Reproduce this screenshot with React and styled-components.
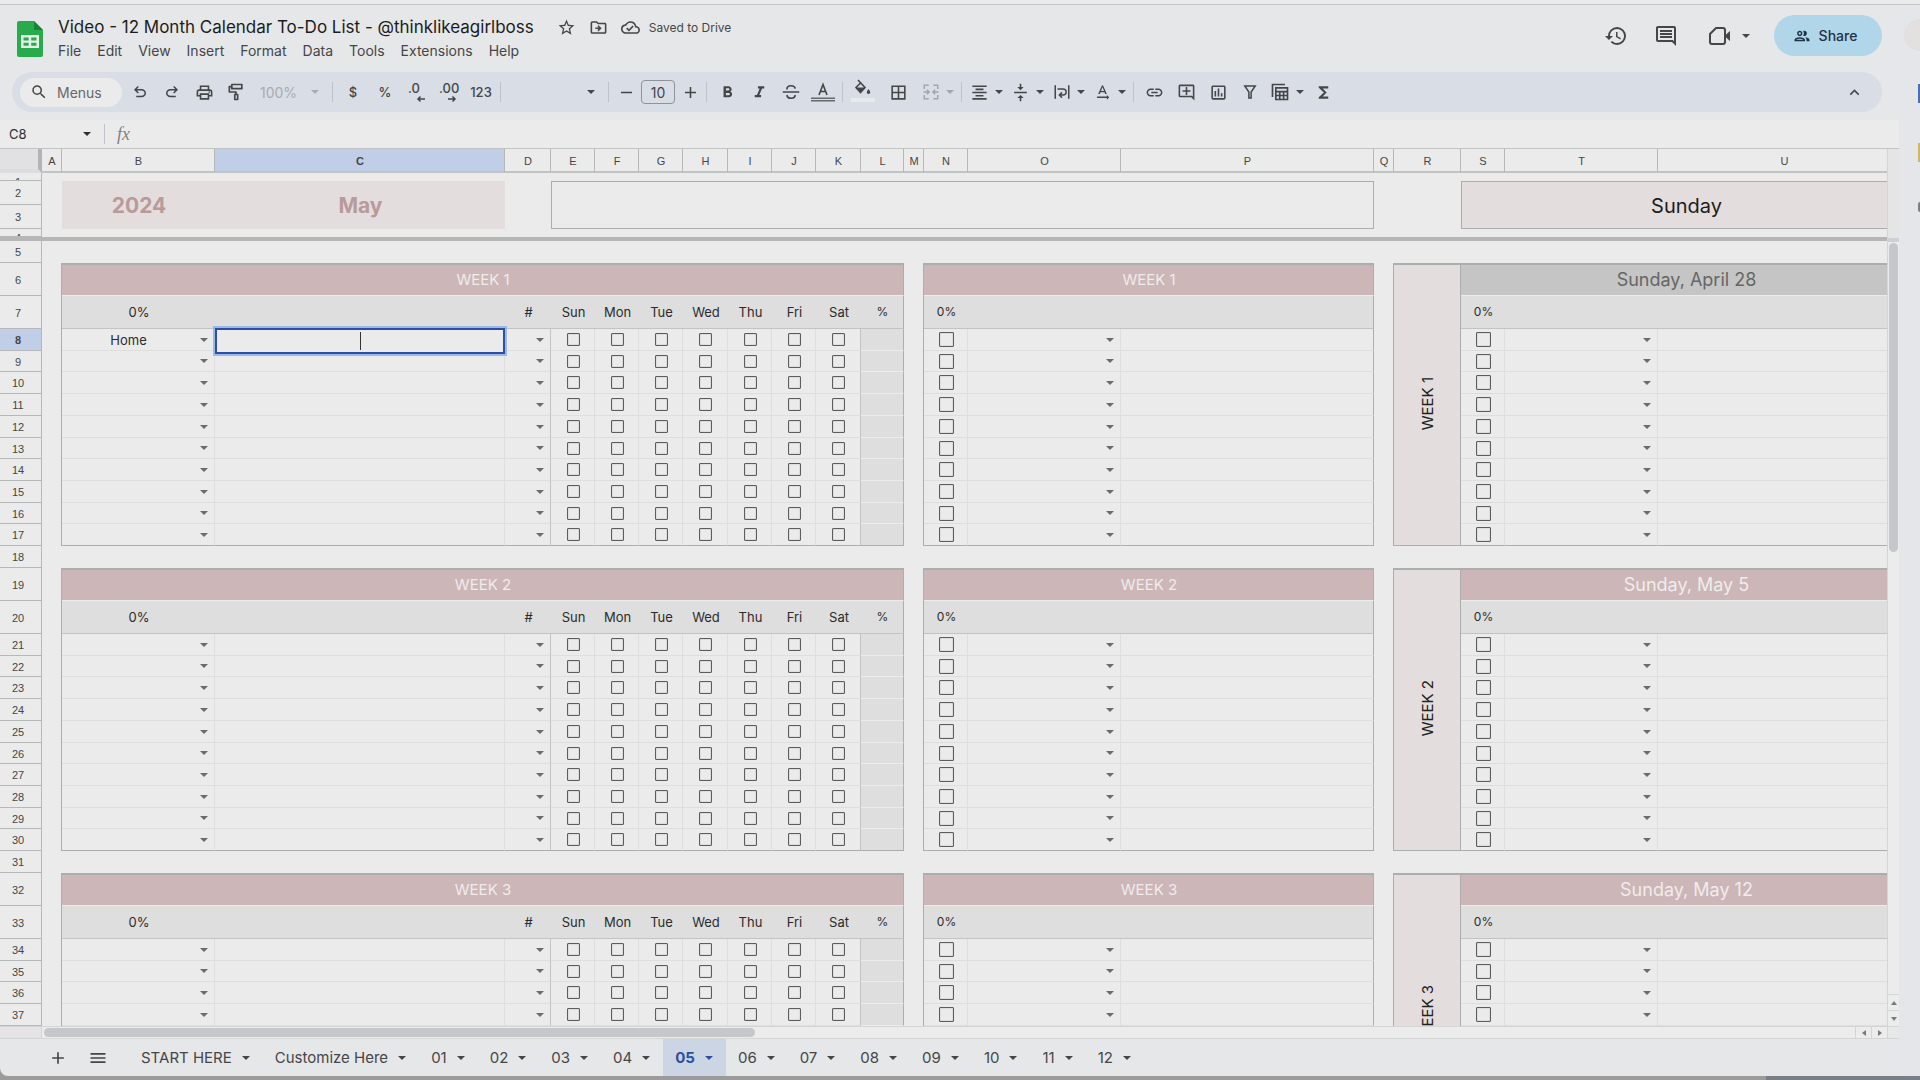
import React from 'react'
import styled, { createGlobalStyle } from 'styled-components'
import {
    MdAdd,
    MdBorderAll,
    MdFormatAlignCenter,
    MdFormatBold,
    MdFormatItalic,
    MdFunctions,
    MdHistory,
    MdKeyboardArrowUp,
    MdLink,
    MdMenu,
    MdOutlineAddComment,
    MdOutlineCloudDone,
    MdOutlineDriveFileMove,
    MdOutlineInsertChart,
    MdOutlineInsertComment,
    MdOutlinePeople,
    MdOutlinePrint,
    MdRemove,
    MdSearch,
    MdStarOutline,
    MdTextRotationNone,
    MdVerticalAlignCenter
} from 'react-icons/md'

const colors = {
    paper: '#ebebeb',
    chrome: '#e6e7e8',
    toolbar: '#d9dde5',
    ink: '#444648',
    line: '#dedede',
    mid: '#c2c3c3',
    strong: '#acadad',
    pink: '#ccb6b8',
    blush: '#e3dddd',
    rose: '#b99a9b',
    summary: '#dedede',
    active: '#c0cee8',
    blue: '#2d4fa3'
}

const GlobalStyle = createGlobalStyle`
    * {
        box-sizing: border-box;
    }

    body {
        margin: 0;
        background: ${colors.chrome};
        color: ${colors.ink};
        font-family: Inter, 'Open Sans', sans-serif;
    }

    button, input, select {
        margin: 0;
        padding: 0;
        border: 0;
        border-radius: 0;
        background: none;
        color: inherit;
        font: inherit;
        appearance: none;
    }
`

const Page = styled.div`
    display: flex;
    flex-direction: column;
    height: 100vh;
    overflow: hidden;
    background: #9b9b9b;
`

const WindowEdge = styled.div`
    flex: none;
    height: 5px;
    background: ${colors.paper};
    border-bottom: 1px solid #c4c5c6;
`

const Window = styled.div`
    display: flex;
    flex: 1;
    min-height: 0;
    background: ${colors.chrome};
    border-radius: 0 0 0 8px;
    overflow: hidden;
`

const Main = styled.div`
    display: flex;
    flex-direction: column;
    flex: 1;
    min-width: 0;
`

const DeskEdge = styled.div`
    flex: none;
    height: 4px;
    background: linear-gradient(to right, #9b9b9b 92%, #787f86 92%);
`

/* Header */

const Header = styled.header`
    display: flex;
    flex: none;
    height: 67px;
    padding: 10px 17px 0 17px;
`

const Logo = styled.svg`
    flex: none;
    width: 26px;
    height: 36px;
    margin-top: 6px;
`

const Heading = styled.div`
    flex: 1;
    padding: 0 0 0 15px;
`

const TitleRow = styled.div`
    display: flex;
    align-items: center;
    height: 24px;
`

const Title = styled.h1`
    margin: 0 17px 0 0;
    color: #1b1c1d;
    font-size: 17px;
    font-weight: 400;
    line-height: 24px;
    white-space: nowrap;
`

const TitleIcon = styled.button`
    display: flex;
    align-items: center;
    justify-content: center;
    width: 32px;
    height: 24px;
    font-size: 19px;
`

const Saved = styled.span`
    padding-left: 2px;
    font-size: 12px;
`

const MenuBar = styled.nav`
    display: flex;
    gap: 16px;
    height: 24px;
    align-items: center;
`

const MenuItem = styled.button`
    font-size: 14px;
    line-height: 24px;
`

const HeaderActions = styled.div`
    display: flex;
    align-items: center;
    height: 41px;
`

const HeaderButton = styled.button`
    display: flex;
    align-items: center;
    justify-content: center;
    gap: 10px;
    width: ${(props) => (props.$wide ? '76px' : '50px')};
    height: 40px;
    font-size: 24px;
`

const Share = styled.button`
    display: flex;
    align-items: center;
    justify-content: center;
    gap: 8px;
    width: 108px;
    height: 41px;
    margin-left: 7px;
    padding-right: 6px;
    border-radius: 21px;
    background: #b2d6e9;
    color: #1f3346;
    font-size: 14px;
    font-weight: 500;

    svg {
        font-size: 18px;
    }
`

/* Toolbar */

const Toolbar = styled.div`
    display: flex;
    align-items: center;
    flex: none;
    height: 40px;
    margin: 0 17px 8px 12px;
    padding: 0 12px 0 8px;
    border-radius: 20px;
    background: ${colors.toolbar};
`

const MenuSearch = styled.label`
    display: flex;
    align-items: center;
    gap: 9px;
    width: 102px;
    height: 29px;
    margin-right: 2px;
    padding-left: 10px;
    border-radius: 15px;
    background: ${colors.paper};
    font-size: 18px;

    input {
        width: 60px;
        font-size: 14px;
    }

    input::placeholder {
        color: #66686a;
        opacity: 1;
    }
`

const Tool = styled.button`
    display: flex;
    align-items: center;
    justify-content: center;
    flex: none;
    width: ${(props) => (props.$wide ? '38px' : '32px')};
    height: 30px;
    font-size: ${(props) => (props.$text ? '13px' : '19px')};
    font-weight: ${(props) => (props.$text ? 500 : 400)};
`

const SplitTool = styled(Tool)`
    gap: 6px;
    width: 41px;
    color: ${(props) => (props.$off ? '#a3a6ab' : 'inherit')};
`

const StepTool = styled(Tool)`
    width: 26px;
`

const Divider = styled.span`
    flex: none;
    width: 1px;
    height: 20px;
    margin: 0 4px 0 3px;
    background: #bfc3c9;
`

const Picker = styled.label`
    display: grid;
    align-items: center;
    width: ${(props) => props.$width};
    height: 28px;
    color: ${(props) => (props.$off ? '#a9acb1' : 'inherit')};
    font-size: 14px;

    select {
        grid-area: 1 / 1;
        width: 100%;
        padding-left: 8px;
    }

    svg {
        grid-area: 1 / 1;
        justify-self: end;
        margin-right: 10px;
        pointer-events: none;
    }
`

const SizeBox = styled.input`
    width: 34px;
    height: 24px;
    margin: 0 2px;
    border: 1px solid #8f9296;
    border-radius: 4px;
    font-size: 14px;
    text-align: center;
`

const Collapse = styled(Tool)`
    margin-left: auto;
`

/* Formula bar */

const FormulaBar = styled.div`
    display: flex;
    align-items: center;
    flex: none;
    height: 29px;
    padding-left: 9px;
    background: ${colors.paper};
    border-bottom: 1px solid ${colors.mid};
    font-size: 13px;
`

const NameBox = styled.label`
    display: flex;
    align-items: center;
    width: 92px;
    padding-right: 10px;
    color: #2d2f30;

    input {
        flex: 1;
        min-width: 0;
    }
`

const Fx = styled.span`
    padding: 0 8px;
    color: #808284;
    font-family: 'Liberation Serif', serif;
    font-size: 18px;
    font-style: italic;
`

const FormulaInput = styled.input`
    flex: 1;
`

/* Sheet */

const SheetArea = styled.div`
    display: flex;
    flex: 1;
    min-height: 0;
`

const Viewport = styled.div`
    flex: 1;
    min-width: 0;
    overflow: hidden;
    background: ${colors.paper};
`

const Sheet = styled.table`
    width: 1911px;
    table-layout: fixed;
    border-collapse: separate;
    border-spacing: 0;
    color: #2b2b2b;
    font-size: 13px;
    line-height: 16px;
`

const Row = styled.tr`
    height: ${(props) => props.$height}px;
`

const ColHead = styled.th`
    padding: 2px 0 0 1px;
    border-right: 1px solid #b6b7b7;
    border-bottom: 2px solid ${colors.mid};
    background: ${(props) => (props.$active ? colors.active : colors.paper)};
    color: ${colors.ink};
    font-family: 'Liberation Sans', Arial, sans-serif;
    font-size: 11px;
    font-weight: ${(props) => (props.$active ? 700 : 400)};
`

const Corner = styled.th`
    padding: 0;
    border-right: 4px solid #b3b4b5;
    border-bottom: 4px solid #dcdcde;
    background: #e1e1e4;
`

const RowHead = styled.th`
    padding: 1px 5px 0 0;
    overflow: hidden;
    border-right: 1px solid #b6b7b7;
    border-bottom: 1px solid #b6b7b7;
    background: ${(props) => (props.$active ? colors.active : colors.paper)};
    color: ${colors.ink};
    font-family: 'Liberation Sans', Arial, sans-serif;
    font-size: 11px;
    font-weight: ${(props) => (props.$active ? 700 : 400)};
`

const Clipped = styled.div`
    height: 6px;
    overflow: hidden;
    line-height: 16px;
`

const FreezeBar = styled.td`
    padding: 0;
    background: #b6b6b6;
`

const Cell = styled.td`
    position: relative;
    padding: 0 0 0 1px;
    text-align: center;
    font-size: ${(props) => (props.$small ? '12px' : '13px')};
    background: ${(props) => props.$fill || 'transparent'};
    border-right: ${(props) => (props.$right ? `1px solid ${colors[props.$right]}` : '0')};
    border-bottom: ${(props) => (props.$bottom ? `1px solid ${colors[props.$bottom]}` : '0')};
`

const BigCell = styled(Cell)`
    padding-top: 2px;
    color: ${colors.rose};
    font-size: 21px;
    font-weight: 700;
`

const OutlinedCell = styled(Cell)`
    padding-top: 2px;
    border: 1px solid ${colors.strong};
    color: #1c1c1c;
    font-size: 20px;
`

const Banner = styled(Cell)`
    border-top: 2px solid ${colors.strong};
    border-bottom: 1px solid #ececec;
    color: ${(props) => props.$ink || '#f0ecec'};
    font-size: ${(props) => (props.$day ? '18px' : '15px')};
`

const WeekLabel = styled(Cell)`
    border-top: 2px solid ${colors.strong};
    color: #222222;
    font-size: 15px;

    span {
        writing-mode: vertical-rl;
        transform: rotate(180deg);
    }
`

const Tick = styled.input.attrs({ type: 'checkbox' })`
    display: block;
    width: ${(props) => (props.$large ? '15px' : '13px')};
    height: ${(props) => (props.$large ? '15px' : '13px')};
    margin: 0 auto;
    border: 1px solid #5c5c5c;
    border-radius: 1px;
    box-shadow: inset 0 0 1px #5c5c5c;
`

const DropCell = styled.div`
    display: grid;
    align-items: center;
    height: 20px;

    select {
        grid-area: 1 / 1;
        width: 100%;
        padding-right: 20px;
        text-align: center;
        text-align-last: center;
    }

    svg {
        grid-area: 1 / 1;
        justify-self: end;
        margin-right: 6px;
        color: #6b6b6b;
        pointer-events: none;
    }
`

const CellEditor = styled.div`
    position: absolute;
    z-index: 1;
    top: -1px;
    left: 0;
    right: -1px;
    height: 26px;
    display: flex;
    align-items: center;
    justify-content: center;
    border: 2px solid ${colors.blue};
    outline: 2px solid #9cb8ea;
    background: ${colors.paper};

    input {
        position: absolute;
        inset: 0;
        width: 100%;
        text-align: center;
    }
`

const TextCursor = styled.span`
    width: 1px;
    height: 18px;
    background: #333333;
`

/* Scroll bars */

const VerticalScroll = styled.div`
    display: flex;
    flex-direction: column;
    flex: none;
    width: 12px;
    border-left: 1px solid #d4d5d5;
    background: #ececec;
`

const ScrollHead = styled.div`
    height: 93px;
    border-bottom: 4px solid #cdd0d6;
    background: #e5e5e6;
`

const ScrollTrack = styled.div`
    flex: 1;
    padding: 1px;
`

const ScrollThumb = styled.div`
    width: ${(props) => props.$width || '9px'};
    height: ${(props) => props.$height || '9px'};
    border-radius: 5px;
    background: #c6c7cb;
`

const ScrollButton = styled.button`
    display: flex;
    align-items: center;
    justify-content: center;
    flex: none;
    width: ${(props) => (props.$side ? '16px' : '11px')};
    height: ${(props) => (props.$side ? '12px' : '16px')};
    border: 0 solid #d4d5d5;
    border-width: ${(props) => (props.$side ? '0 0 0 1px' : '1px 0 0 0')};
    color: #77797b;
`

const HorizontalScroll = styled.div`
    display: flex;
    flex: none;
    height: 13px;
    border-top: 1px solid #d4d5d5;
    border-bottom: 1px solid #d4d5d5;
    background: #ececec;
`

const ScrollGutter = styled.div`
    width: 42px;
    border-right: 1px solid #d4d5d5;
    background: #e5e3e5;
`

const HorizontalTrack = styled.div`
    flex: 1;
    padding: 1px 2px;
`

const ScrollEnd = styled.div`
    width: 12px;
    border-left: 1px solid #d4d5d5;
    background: #e8e8ea;
`

/* Sheet tabs */

const Tabs = styled.footer`
    display: flex;
    align-items: stretch;
    flex: none;
    height: 37px;
    padding-left: 38px;
`

const TabTool = styled.button`
    display: flex;
    align-items: center;
    justify-content: center;
    width: 40px;
    font-size: 20px;
`

const Tab = styled.button`
    display: flex;
    align-items: center;
    gap: 10px;
    padding: 0 13px 0 12px;
    background: ${(props) => (props.$active ? '#ccd5e4' : 'transparent')};
    color: ${(props) => (props.$active ? colors.blue : 'inherit')};
    font-size: 15px;
    font-weight: ${(props) => (props.$active ? 700 : 400)};
    white-space: nowrap;
`

const TabList = styled.div`
    display: flex;
    padding-left: 11px;
`

/* Side panel */

const SidePanel = styled.aside`
    display: flex;
    flex-direction: column;
    align-items: flex-end;
    flex: none;
    width: 21px;
    overflow: hidden;
    background: #e4e6e9;
`

const Avatar = styled.div`
    flex: none;
    align-self: flex-start;
    width: 32px;
    height: 32px;
    margin: 14px 0 33px 5px;
    border-radius: 16px;
    background: #e2e1e0;
    border: 1px solid #dfdfde;
`

const AddOn = styled.button`
    width: 2px;
    height: ${(props) => (props.$round ? '10px' : '19px')};
    margin-bottom: 40px;
    border-radius: ${(props) => (props.$round ? '2px 0 0 2px' : '0')};
    background: ${(props) => props.$color};
`

/* Drawings */

const Caret = ({ size = 8 }) => (
    <svg width={size} height={size / 2} viewBox="0 0 8 4" fill="currentColor" aria-hidden="true">
        <path d="M0 0h8L4 4z" />
    </svg>
)

const Icon = ({ children, size = 18 }) => (
    <svg width={size} height={size} viewBox="0 0 24 24" fill="currentColor" aria-hidden="true">
        {children}
    </svg>
)

const undoPath =
    'M7 19v-2h7.1q1.575 0 2.738-1T18 13.5 16.838 11 14.1 10H7.8l2.6 2.6L9 14 4 9l5-5 1.4 1.4L7.8 8h6.3q2.425 0 4.163 1.575T20 13.5t-1.737 3.925T14.1 19z'

const UndoIcon = () => (
    <Icon>
        <path d={undoPath} />
    </Icon>
)

const RedoIcon = () => (
    <Icon>
        <path d={undoPath} transform="matrix(-1 0 0 1 24 0)" />
    </Icon>
)

const PaintIcon = () => (
    <Icon size={20}>
        <path
            d="M7 3h12v5H7zM7 5.500H4V12h8v3M10.500 15h3.500v6h-3.500z"
            fill="none"
            stroke="currentColor"
            strokeWidth="2"
            strokeLinejoin="round"
        />
    </Icon>
)

const DecimalIcon = ({ text, back }) => (
    <svg width="22" height="24" viewBox="0 0 22 24" aria-hidden="true">
        <text x={back ? 2 : 1} y="13" fill="currentColor" fontSize="13" fontWeight="500">
            {text}
        </text>
        <path
            d={back ? 'M19 19h-7m2.500-2.500L12 19l2.500 2.500' : 'M10 19h7m-2.500-2.500L17 19l-2.500 2.500'}
            fill="none"
            stroke="currentColor"
            strokeWidth="1.500"
        />
    </svg>
)

const StrikeIcon = () => (
    <Icon size={18}>
        <path
            d="M1 12h22M6.500 8.500C6.500 2 17 2.500 17.500 7.500M6.500 16c1 6 11 5.500 11 0"
            fill="none"
            stroke="currentColor"
            strokeWidth="2.200"
        />
    </Icon>
)

const TextColorIcon = () => (
    <svg width="24" height="24" viewBox="0 0 24 24" aria-hidden="true">
        <path
            d="M8 15l4-10.500L16 15M9.500 11.500h5"
            fill="none"
            stroke="currentColor"
            strokeWidth="1.600"
        />
        <path d="M0 17.500h24v1.500H0zM0 20h24v1.500H0z" fill="#66696d" />
    </svg>
)

const FillIcon = () => (
    <svg width="24" height="26" viewBox="0 0 24 26" aria-hidden="true">
        <path d="M7 1l7 7.500-4.500 5L5 8.500 9.500 4" fill="none" stroke="currentColor" strokeWidth="1.600" />
        <path d="M5 8.500h9l-4.500 5zM17.500 10q3.500 4.500 0 5-3.500-.5 0-5z" fill="currentColor" />
        <path d="M0 19h24v4H0z" fill="#e8e9ea" />
    </svg>
)

const MergeIcon = () => (
    <Icon>
        <path
            d="M9 3H3v5M3 16v5h6M15 3h6v5M21 16v5h-6M2 12h7M6.500 9L9.500 12l-3 3M22 12h-7M17.500 9l-3 3 3 3"
            fill="none"
            stroke="currentColor"
            strokeWidth="2"
        />
    </Icon>
)

const WrapIcon = () => (
    <Icon>
        <path
            d="M3 3v18M21 3v18M6 8h7c6 0 6 8 0 8H9M12 12.500L8.500 16l3.500 3.500"
            fill="none"
            stroke="currentColor"
            strokeWidth="2"
        />
    </Icon>
)

const TableViewsIcon = () => (
    <Icon size={20}>
        <path
            d="M3 18V3h15M7 7h14v14H7zM7 11.500h14M7 16.200h14M11.700 11.500V21M16.300 11.500V21"
            fill="none"
            stroke="currentColor"
            strokeWidth="2"
        />
    </Icon>
)

const FunnelIcon = () => (
    <Icon>
        <path
            d="M5 4h14l-5.500 8v8h-3v-8z"
            fill="none"
            stroke="currentColor"
            strokeWidth="2"
        />
    </Icon>
)

const CameraIcon = () => (
    <Icon size={24}>
        <path
            d="M8 4h7q2 0 2 2v12q0 2-2 2H4q-2 0-2-2v-8z"
            fill="none"
            stroke="currentColor"
            strokeWidth="2"
        />
        <path d="M17 11.500L22 7v10l-5-4.500z" />
    </Icon>
)

/* Data */

const menus = ['File', 'Edit', 'View', 'Insert', 'Format', 'Data', 'Tools', 'Extensions', 'Help']

const columns = [
    ['A', 20], ['B', 153], ['C', 290], ['D', 46], ['E', 44], ['F', 44], ['G', 44],
    ['H', 45], ['I', 44], ['J', 44], ['K', 45], ['L', 43], ['M', 20], ['N', 44],
    ['O', 153], ['P', 253], ['Q', 20], ['R', 67], ['S', 44], ['T', 153], ['U', 253]
]

const days = ['Sun', 'Mon', 'Tue', 'Wed', 'Thu', 'Fri', 'Sat']

const weeks = [
    { name: 'WEEK 1', first: 6, date: 'Sunday, April 28', past: true },
    { name: 'WEEK 2', first: 19, date: 'Sunday, May 5' },
    { name: 'WEEK 3', first: 32, date: 'Sunday, May 12' }
]

const taskHeights = [22, 21, 22, 22, 22, 21, 22, 22, 21, 22]

const sheetTabs = [
    'START HERE', 'Customize Here', '01', '02', '03', '04', '05',
    '06', '07', '08', '09', '10', '11', '12'
]

const CategorySelect = ({ label, value }) => (
    <DropCell>
        <select aria-label={label} defaultValue={value || ''}>
            <option value=""></option>
            {value && <option value={value}>{value}</option>}
        </select>
        <Caret />
    </DropCell>
)

const TaskRow = ({ number, height, last }) => {
    const active = number === 8
    const bottom = last ? 'strong' : 'line'

    return (
        <Row $height={height}>
            <RowHead scope="row" $active={active}>{number}</RowHead>
            <Cell $right="strong" />
            <Cell $right="line" $bottom={bottom}>
                <CategorySelect label={`Category ${number}`} value={active ? 'Home' : ''} />
            </Cell>
            <Cell $right="line" $bottom={bottom}>
                {active && (
                    <CellEditor>
                        <input aria-label="Cell C8" />
                        <TextCursor />
                    </CellEditor>
                )}
            </Cell>
            <Cell $right="mid" $bottom={bottom}>
                <CategorySelect label={`Priority ${number}`} />
            </Cell>
            {days.map((day) => (
                <Cell key={day} $right={day === 'Sat' ? 'mid' : 'line'} $bottom={bottom}>
                    <Tick aria-label={`${day} ${number}`} />
                </Cell>
            ))}
            <Cell $right="strong" $bottom={last ? 'strong' : 'paper'} $fill={colors.summary} />
            <Cell $right="strong" />
            <Cell $right="line" $bottom={bottom}>
                <Tick $large aria-label={`Weekly task ${number}`} />
            </Cell>
            <Cell $right="line" $bottom={bottom}>
                <CategorySelect label={`Weekly category ${number}`} />
            </Cell>
            <Cell $right="strong" $bottom={bottom} />
            <Cell $right="strong" />
            <Cell $right="line" $bottom={bottom}>
                <Tick $large aria-label={`Sunday task ${number}`} />
            </Cell>
            <Cell $right="line" $bottom={bottom}>
                <CategorySelect label={`Sunday category ${number}`} />
            </Cell>
            <Cell $bottom={bottom} />
        </Row>
    )
}

const WeekRows = ({ week }) => {
    const { name, first, date, past } = week

    return (
        <>
            <Row $height={33}>
                <RowHead scope="row">{first}</RowHead>
                <Cell $right="strong" />
                <Banner colSpan={11} $right="strong" $fill={colors.pink}>{name}</Banner>
                <Cell $right="strong" />
                <Banner colSpan={3} $right="strong" $fill={colors.pink}>{name}</Banner>
                <Cell $right="strong" />
                <WeekLabel rowSpan={12} $right="strong" $bottom="strong" $fill={colors.blush}>
                    <span>{name}</span>
                </WeekLabel>
                <Banner
                    colSpan={3}
                    $day
                    $fill={past ? '#c5c5c5' : colors.pink}
                    $ink={past ? '#666666' : undefined}
                >
                    {date}
                </Banner>
            </Row>
            <Row $height={33}>
                <RowHead scope="row">{first + 1}</RowHead>
                <Cell $right="strong" />
                <Cell $bottom="mid" $fill={colors.summary}>0%</Cell>
                <Cell $bottom="mid" $fill={colors.summary} />
                <Cell $bottom="mid" $fill={colors.summary}>#</Cell>
                {days.map((day) => (
                    <Cell key={day} $bottom="mid" $fill={colors.summary}>{day}</Cell>
                ))}
                <Cell $small $right="strong" $bottom="mid" $fill={colors.summary}>%</Cell>
                <Cell $right="strong" />
                <Cell $small $bottom="mid" $fill={colors.summary}>0%</Cell>
                <Cell colSpan={2} $right="strong" $bottom="mid" $fill={colors.summary} />
                <Cell $right="strong" />
                <Cell $small $bottom="mid" $fill={colors.summary}>0%</Cell>
                <Cell colSpan={2} $bottom="mid" $fill={colors.summary} />
            </Row>
            {taskHeights.map((height, index) => (
                <TaskRow
                    key={index}
                    number={first + 2 + index}
                    height={height}
                    last={index === taskHeights.length - 1}
                />
            ))}
            <Row $height={22}>
                <RowHead scope="row">{first + 12}</RowHead>
                <Cell colSpan={21} />
            </Row>
        </>
    )
}

const Planner = () => (
    <Sheet>
        <colgroup>
            <col width="42" />
            {columns.map(([name, width]) => (
                <col key={name} width={width} />
            ))}
        </colgroup>
        <thead>
            <Row $height={24}>
                <Corner />
                {columns.map(([name]) => (
                    <ColHead key={name} scope="col" $active={name === 'C'}>{name}</ColHead>
                ))}
            </Row>
        </thead>
        <tbody>
            <Row $height={8}>
                <RowHead scope="row"><Clipped>1</Clipped></RowHead>
                <Cell colSpan={21} />
            </Row>
            <Row $height={24}>
                <RowHead scope="row">2</RowHead>
                <Cell rowSpan={2} />
                <BigCell rowSpan={2} $fill={colors.blush}>2024</BigCell>
                <BigCell rowSpan={2} $fill={colors.blush}>May</BigCell>
                <Cell rowSpan={2} />
                <OutlinedCell rowSpan={2} colSpan={12} />
                <Cell rowSpan={2} />
                <Cell rowSpan={2} />
                <OutlinedCell rowSpan={2} colSpan={3} $fill={colors.blush}>Sunday</OutlinedCell>
            </Row>
            <Row $height={24}>
                <RowHead scope="row">3</RowHead>
            </Row>
            <Row $height={8}>
                <RowHead scope="row"><Clipped>4</Clipped></RowHead>
                <Cell colSpan={21} />
            </Row>
            <Row $height={4}>
                <FreezeBar colSpan={22} />
            </Row>
            <Row $height={22}>
                <RowHead scope="row">5</RowHead>
                <Cell colSpan={21} />
            </Row>
            {weeks.map((week) => (
                <WeekRows key={week.name} week={week} />
            ))}
        </tbody>
    </Sheet>
)

const TopBar = () => (
    <Header>
        <Logo viewBox="0 0 26 36" aria-label="Sheets">
            <path d="M2 0h15l9 9v25q0 2-2 2H2q-2 0-2-2V2q0-2 2-2z" fill="#27ab4b" />
            <path d="M17 0l9 9h-9z" fill="#178238" />
            <path d="M4 14h18v13H4zM6.500 16.500v3h5.200v-3zM14.200 16.500v3h5.300v-3zM6.500 21.800v3h5.200v-3zM14.200 21.800v3h5.300v-3z" fill="#e4efe6" fillRule="evenodd" />
        </Logo>
        <Heading>
            <TitleRow>
                <Title>Video - 12 Month Calendar To-Do List - @thinklikeagirlboss</Title>
                <TitleIcon aria-label="Star"><MdStarOutline /></TitleIcon>
                <TitleIcon aria-label="Move"><MdOutlineDriveFileMove /></TitleIcon>
                <TitleIcon aria-label="Document status"><MdOutlineCloudDone /></TitleIcon>
                <Saved>Saved to Drive</Saved>
            </TitleRow>
            <MenuBar>
                {menus.map((menu) => (
                    <MenuItem key={menu}>{menu}</MenuItem>
                ))}
            </MenuBar>
        </Heading>
        <HeaderActions>
            <HeaderButton aria-label="History"><MdHistory /></HeaderButton>
            <HeaderButton aria-label="Comments"><MdOutlineInsertComment /></HeaderButton>
            <HeaderButton $wide aria-label="Meet"><CameraIcon /><Caret /></HeaderButton>
            <Share><MdOutlinePeople />Share</Share>
        </HeaderActions>
    </Header>
)

const Tools = () => (
    <Toolbar>
        <MenuSearch>
            <MdSearch />
            <input aria-label="Menus" placeholder="Menus" />
        </MenuSearch>
        <Tool aria-label="Undo"><UndoIcon /></Tool>
        <Tool aria-label="Redo"><RedoIcon /></Tool>
        <Tool aria-label="Print"><MdOutlinePrint /></Tool>
        <Tool aria-label="Paint format"><PaintIcon /></Tool>
        <Picker $width="77px" $off>
            <select aria-label="Zoom"><option>100%</option></select>
            <Caret />
        </Picker>
        <Divider />
        <Tool $text aria-label="Currency">$</Tool>
        <Tool $text aria-label="Percent">%</Tool>
        <Tool aria-label="Decrease decimals"><DecimalIcon text=".0" back /></Tool>
        <Tool aria-label="Increase decimals"><DecimalIcon text=".00" /></Tool>
        <Tool $text aria-label="More formats">123</Tool>
        <Divider />
        <Picker $width="100px">
            <select aria-label="Font"><option></option></select>
            <Caret />
        </Picker>
        <Divider />
        <StepTool aria-label="Decrease font size"><MdRemove /></StepTool>
        <SizeBox aria-label="Font size" defaultValue="10" />
        <StepTool aria-label="Increase font size"><MdAdd /></StepTool>
        <Divider />
        <Tool aria-label="Bold"><MdFormatBold /></Tool>
        <Tool aria-label="Italic"><MdFormatItalic /></Tool>
        <Tool aria-label="Strikethrough"><StrikeIcon /></Tool>
        <Tool aria-label="Text color"><TextColorIcon /></Tool>
        <Divider />
        <Tool aria-label="Fill color"><FillIcon /></Tool>
        <Tool $wide aria-label="Borders"><MdBorderAll /></Tool>
        <SplitTool $off aria-label="Merge"><MergeIcon /><Caret /></SplitTool>
        <Divider />
        <SplitTool aria-label="Horizontal align"><MdFormatAlignCenter /><Caret /></SplitTool>
        <SplitTool aria-label="Vertical align"><MdVerticalAlignCenter /><Caret /></SplitTool>
        <SplitTool aria-label="Text wrapping"><WrapIcon /><Caret /></SplitTool>
        <SplitTool aria-label="Text rotation"><MdTextRotationNone /><Caret /></SplitTool>
        <Divider />
        <Tool aria-label="Insert link"><MdLink /></Tool>
        <Tool aria-label="Insert comment"><MdOutlineAddComment /></Tool>
        <Tool aria-label="Insert chart"><MdOutlineInsertChart /></Tool>
        <Tool aria-label="Filter"><FunnelIcon /></Tool>
        <SplitTool aria-label="Table views"><TableViewsIcon /><Caret /></SplitTool>
        <Tool aria-label="Functions"><MdFunctions /></Tool>
        <Collapse aria-label="Hide the menus"><MdKeyboardArrowUp /></Collapse>
    </Toolbar>
)

const App = () => (
    <Page>
        <GlobalStyle />
        <WindowEdge />
        <Window>
            <Main>
                <TopBar />
                <Tools />
                <FormulaBar>
                    <NameBox>
                        <input aria-label="Name box" defaultValue="C8" />
                        <Caret />
                    </NameBox>
                    <Divider />
                    <Fx>fx</Fx>
                    <FormulaInput aria-label="Formula" />
                </FormulaBar>
                <SheetArea>
                    <Viewport>
                        <Planner />
                    </Viewport>
                    <VerticalScroll>
                        <ScrollHead />
                        <ScrollTrack><ScrollThumb $height="309px" /></ScrollTrack>
                        <ScrollButton aria-label="Scroll up">
                            <svg width="6" height="4" viewBox="0 0 6 4" fill="currentColor"><path d="M0 4h6L3 0z" /></svg>
                        </ScrollButton>
                        <ScrollButton aria-label="Scroll down">
                            <svg width="6" height="4" viewBox="0 0 6 4" fill="currentColor"><path d="M0 0h6L3 4z" /></svg>
                        </ScrollButton>
                    </VerticalScroll>
                </SheetArea>
                <HorizontalScroll>
                    <ScrollGutter />
                    <HorizontalTrack><ScrollThumb $width="711px" /></HorizontalTrack>
                    <ScrollButton $side aria-label="Scroll left">
                        <svg width="4" height="6" viewBox="0 0 4 6" fill="currentColor"><path d="M4 0v6L0 3z" /></svg>
                    </ScrollButton>
                    <ScrollButton $side aria-label="Scroll right">
                        <svg width="4" height="6" viewBox="0 0 4 6" fill="currentColor"><path d="M0 0v6l4-3z" /></svg>
                    </ScrollButton>
                    <ScrollEnd />
                </HorizontalScroll>
                <Tabs>
                    <TabTool aria-label="Add sheet"><MdAdd /></TabTool>
                    <TabTool aria-label="All sheets"><MdMenu /></TabTool>
                    <TabList>
                        {sheetTabs.map((name) => (
                            <Tab key={name} $active={name === '05'}>{name}<Caret /></Tab>
                        ))}
                    </TabList>
                </Tabs>
            </Main>
            <SidePanel>
                <Avatar />
                <AddOn $color="#4a6fae" aria-label="Calendar" />
                <AddOn $color="#cdb768" aria-label="Keep" />
                <AddOn $round $color="#7b7f86" aria-label="Contacts" />
            </SidePanel>
        </Window>
        <DeskEdge />
    </Page>
)

export default App
